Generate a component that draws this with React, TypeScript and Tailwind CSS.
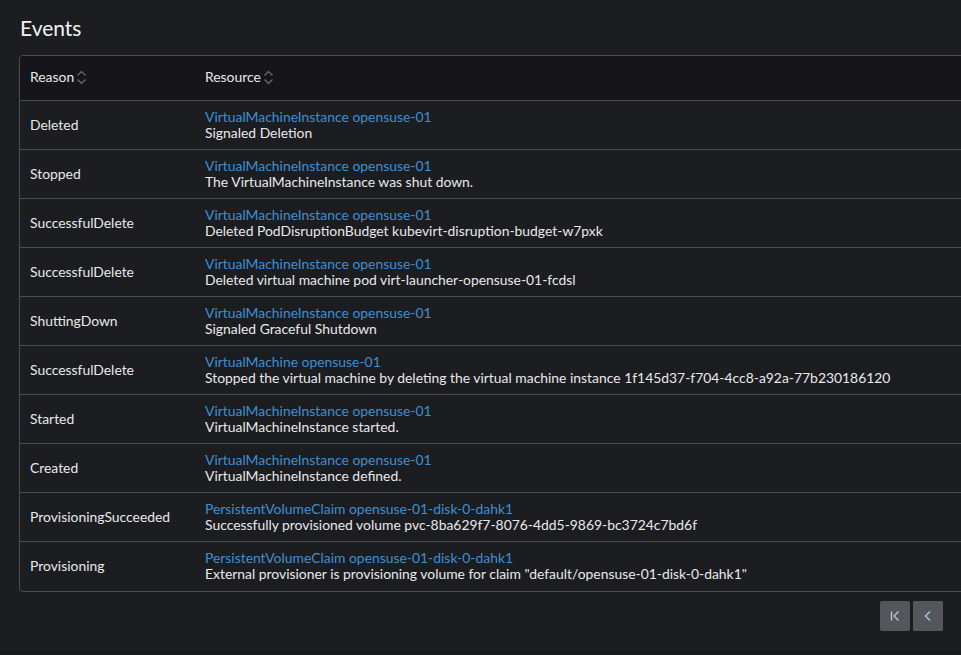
import React from 'react';

type EventRow = {
  reason: string;
  kind: string;
  name: string;
  message: string;
};

const EVENTS: EventRow[] = [
  { reason: 'Deleted', kind: 'VirtualMachineInstance', name: 'opensuse-01', message: 'Signaled Deletion' },
  { reason: 'Stopped', kind: 'VirtualMachineInstance', name: 'opensuse-01', message: 'The VirtualMachineInstance was shut down.' },
  { reason: 'SuccessfulDelete', kind: 'VirtualMachineInstance', name: 'opensuse-01', message: 'Deleted PodDisruptionBudget kubevirt-disruption-budget-w7pxk' },
  { reason: 'SuccessfulDelete', kind: 'VirtualMachineInstance', name: 'opensuse-01', message: 'Deleted virtual machine pod virt-launcher-opensuse-01-fcdsl' },
  { reason: 'ShuttingDown', kind: 'VirtualMachineInstance', name: 'opensuse-01', message: 'Signaled Graceful Shutdown' },
  { reason: 'SuccessfulDelete', kind: 'VirtualMachine', name: 'opensuse-01', message: 'Stopped the virtual machine by deleting the virtual machine instance 1f145d37-f704-4cc8-a92a-77b230186120' },
  { reason: 'Started', kind: 'VirtualMachineInstance', name: 'opensuse-01', message: 'VirtualMachineInstance started.' },
  { reason: 'Created', kind: 'VirtualMachineInstance', name: 'opensuse-01', message: 'VirtualMachineInstance defined.' },
  { reason: 'ProvisioningSucceeded', kind: 'PersistentVolumeClaim', name: 'opensuse-01-disk-0-dahk1', message: 'Successfully provisioned volume pvc-8ba629f7-8076-4dd5-9869-bc3724c7bd6f' },
  { reason: 'Provisioning', kind: 'PersistentVolumeClaim', name: 'opensuse-01-disk-0-dahk1', message: 'External provisioner is provisioning volume for claim "default/opensuse-01-disk-0-dahk1"' },
];

const SortIcon = () => (
  <svg width="11" height="15" viewBox="0 0 11 15" fill="none" stroke="#6b6c72" strokeWidth="1.2" className="ml-[2px]">
    <path d="M1.5 5.5 L5.5 1.5 L9.5 5.5" />
    <path d="M1.5 9.5 L5.5 13.5 L9.5 9.5" />
  </svg>
);

const App: React.FC = () => {
  return (
    <div
      className="w-[961px] h-[655px] overflow-hidden bg-[#1c1d21] text-[#e8e8ea] flex flex-col"
      style={{ fontFamily: 'Lato, "Open Sans", sans-serif' }}
    >
      <div className="flex-1 pl-[19px] pt-[14px]">
        {/* 제목 */}
        <h1 className="text-[21px] leading-[28px] text-[#f2f2f4] pl-px">Events</h1>

        {/* 이벤트 테이블 */}
        <div className="mt-[13px] w-[1000px] border border-[#4b4c51] rounded-[4px] overflow-hidden text-[13.9px]">
          <div className="flex items-center h-[45px] pb-[1px] bg-[#16161a] border-b border-[#4b4c51]">
            <div className="w-[185px] pl-[10px] flex items-center">
              Reason
              <SortIcon />
            </div>
            <div className="flex items-center">
              Resource
              <SortIcon />
            </div>
          </div>
          {EVENTS.map((e, i) => (
            <div
              key={i}
              className={`flex items-center h-[49px] ${i < EVENTS.length - 1 ? 'border-b border-[#4b4c51]' : ''}`}
            >
              <div className="w-[185px] pl-[10px]">{e.reason}</div>
              <div className="leading-[16px] pb-px">
                <div className="text-[#3c8fd3]">
                  {e.kind} {e.name}
                </div>
                <div>{e.message}</div>
              </div>
            </div>
          ))}
        </div>

        {/* 페이지 이동 */}
        <div className="flex justify-end gap-[3px] mt-[9px] pr-[18px] w-[942px]">
          <button
            type="button"
            className="w-[30px] h-[30px] rounded-[2px] bg-[#55565b] flex items-center justify-center"
          >
            <svg width="12" height="12" viewBox="0 0 12 12" fill="none" stroke="#a9bfd8" strokeWidth="1.5">
              <path d="M2.5 1.5 V10.5" />
              <path d="M9.5 1.5 L5 6 L9.5 10.5" />
            </svg>
          </button>
          <button
            type="button"
            className="w-[30px] h-[30px] rounded-[2px] bg-[#55565b] flex items-center justify-center"
          >
            <svg width="12" height="12" viewBox="0 0 12 12" fill="none" stroke="#a9bfd8" strokeWidth="1.5">
              <path d="M8 1.5 L3.5 6 L8 10.5" />
            </svg>
          </button>
        </div>
      </div>
      <div className="h-[4px] bg-[#17181b]" />
    </div>
  );
};

export default App;
